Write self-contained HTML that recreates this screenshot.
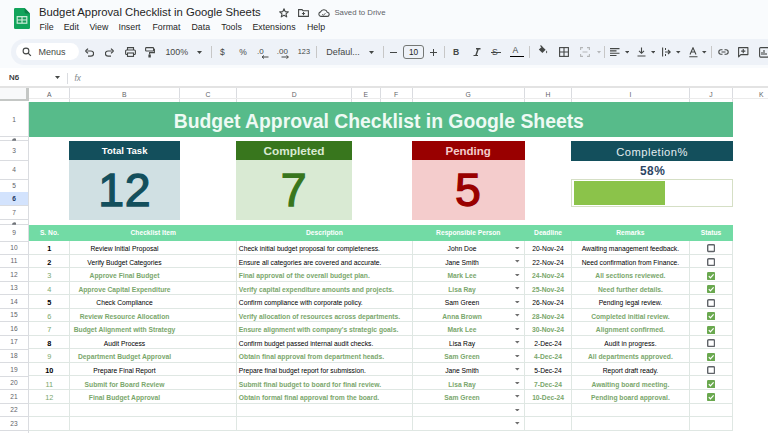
<!DOCTYPE html>
<html><head><meta charset="utf-8"><style>
html,body{margin:0;padding:0;width:768px;height:433px;overflow:hidden;background:#fff;font-family:"Liberation Sans", sans-serif;}
</style></head><body>
<div style="position:absolute;left:0.00px;top:0.00px;width:768.00px;height:68.00px;background:#f9fbfd"></div><svg style="position:absolute;left:13.50px;top:8.00px;" width="16" height="21" viewBox="0 0 16 21"><path d="M1.3 0 H10.6 L16 5.4 V19.7 A1.3 1.3 0 0 1 14.7 21 H1.3 A1.3 1.3 0 0 1 0 19.7 V1.3 A1.3 1.3 0 0 1 1.3 0Z" fill="#12a45b"/><path d="M10.6 0 L16 5.4 H12 A1.4 1.4 0 0 1 10.6 4Z" fill="#0c7f46"/><rect x="2.6" y="8" width="10.8" height="7.8" fill="#c8ecd6"/><rect x="3.8" y="9.3" width="3.6" height="2.1" fill="#1a9a5a"/><rect x="8.6" y="9.3" width="3.6" height="2.1" fill="#1a9a5a"/><rect x="3.8" y="12.5" width="3.6" height="2.1" fill="#1a9a5a"/><rect x="8.6" y="12.5" width="3.6" height="2.1" fill="#1a9a5a"/></svg><div style="position:absolute;left:39.00px;top:5.77px;font-size:11.3px;line-height:12.98px;color:#1f1f1f;font-weight:normal;white-space:nowrap;">Budget Approval Checklist in Google Sheets</div><svg style="position:absolute;left:278.50px;top:8.00px;" width="10" height="9.5" viewBox="0 0 10 9.5"><path d="M5 0.8 L6.2 3.6 L9.3 3.9 L7 5.9 L7.7 8.9 L5 7.3 L2.3 8.9 L3 5.9 L0.7 3.9 L3.8 3.6Z" fill="none" stroke="#444746" stroke-width="1.1" stroke-linejoin="round"/></svg><svg style="position:absolute;left:298.00px;top:8.50px;" width="11" height="8" viewBox="0 0 11 8"><path d="M0.6 0.6 H4 L5 1.7 H10.4 V7.4 H0.6Z" fill="none" stroke="#444746" stroke-width="1.1"/><path d="M5.5 3 V6.2 M3.9 4.6 H7.1" stroke="#444746" stroke-width="1"/></svg><svg style="position:absolute;left:318.00px;top:8.50px;" width="11.5" height="8" viewBox="0 0 11.5 8"><path d="M2.8 7.4 H9 A2.1 2.1 0 0 0 9.2 3.2 A3.5 3.5 0 0 0 2.6 2.9 A2.3 2.3 0 0 0 2.8 7.4Z" fill="none" stroke="#444746" stroke-width="1.1"/><path d="M4.2 5.3 L5.4 6.3 L7.4 4.2" fill="none" stroke="#444746" stroke-width="0.9"/></svg><div style="position:absolute;left:334.40px;top:8.74px;font-size:7.8px;line-height:8.96px;color:#5f6368;font-weight:normal;white-space:nowrap;">Saved to Drive</div><div style="position:absolute;left:39.40px;top:21.64px;font-size:8.8px;line-height:10.11px;color:#1f1f1f;font-weight:normal;white-space:nowrap;">File</div><div style="position:absolute;left:63.75px;top:21.64px;font-size:8.8px;line-height:10.11px;color:#1f1f1f;font-weight:normal;white-space:nowrap;">Edit</div><div style="position:absolute;left:89.40px;top:21.64px;font-size:8.8px;line-height:10.11px;color:#1f1f1f;font-weight:normal;white-space:nowrap;">View</div><div style="position:absolute;left:118.50px;top:21.64px;font-size:8.8px;line-height:10.11px;color:#1f1f1f;font-weight:normal;white-space:nowrap;">Insert</div><div style="position:absolute;left:152.50px;top:21.64px;font-size:8.8px;line-height:10.11px;color:#1f1f1f;font-weight:normal;white-space:nowrap;">Format</div><div style="position:absolute;left:191.50px;top:21.64px;font-size:8.8px;line-height:10.11px;color:#1f1f1f;font-weight:normal;white-space:nowrap;">Data</div><div style="position:absolute;left:221.25px;top:21.64px;font-size:8.8px;line-height:10.11px;color:#1f1f1f;font-weight:normal;white-space:nowrap;">Tools</div><div style="position:absolute;left:252.50px;top:21.64px;font-size:8.8px;line-height:10.11px;color:#1f1f1f;font-weight:normal;white-space:nowrap;">Extensions</div><div style="position:absolute;left:307.00px;top:21.64px;font-size:8.8px;line-height:10.11px;color:#1f1f1f;font-weight:normal;white-space:nowrap;">Help</div><div style="position:absolute;left:11.00px;top:39.00px;width:777.00px;height:25.50px;background:#eef2f8;border-radius:13px"></div><div style="position:absolute;left:16.00px;top:42.50px;width:62.70px;height:17.70px;background:#fff;border-radius:9px"></div><svg style="position:absolute;left:22.00px;top:46.80px;" width="10" height="10" viewBox="0 0 10 10"><circle cx="4" cy="4" r="2.9" fill="none" stroke="#444746" stroke-width="1.1"/><path d="M6.1 6.1 L8.9 8.9" stroke="#444746" stroke-width="1.2"/></svg><div style="position:absolute;left:38.60px;top:46.75px;font-size:9px;line-height:10.34px;color:#444746;font-weight:normal;white-space:nowrap;">Menus</div><svg style="position:absolute;left:85.00px;top:47.50px;" width="9" height="9" viewBox="0 0 9 9"><path d="M2.2 3 H6 A2.6 2.6 0 0 1 6 8.2 H3" fill="none" stroke="#444746" stroke-width="1.2"/><path d="M0.5 3 L3 0.6 M0.5 3 L3 5.4" stroke="#444746" stroke-width="1.2" fill="none"/></svg><svg style="position:absolute;left:105.00px;top:47.50px;" width="9" height="9" viewBox="0 0 9 9"><path d="M6.8 3 H3 A2.6 2.6 0 0 0 3 8.2 H6" fill="none" stroke="#444746" stroke-width="1.2"/><path d="M8.5 3 L6 0.6 M8.5 3 L6 5.4" stroke="#444746" stroke-width="1.2" fill="none"/></svg><svg style="position:absolute;left:124.50px;top:47.00px;" width="11" height="10" viewBox="0 0 11 10"><path d="M2.5 3 V0.6 H8.5 V3" fill="none" stroke="#444746" stroke-width="1.1"/><rect x="0.6" y="3" width="9.8" height="4.5" rx="1" fill="none" stroke="#444746" stroke-width="1.1"/><rect x="2.5" y="6" width="6" height="3.4" fill="#eef2f8" stroke="#444746" stroke-width="1.1"/></svg><svg style="position:absolute;left:144.50px;top:46.50px;" width="10" height="11" viewBox="0 0 10 11"><rect x="0.6" y="0.6" width="8" height="3.4" rx="0.8" fill="none" stroke="#444746" stroke-width="1.1"/><path d="M8.6 2.3 H9.4 V5.6 H4.6 V7.5" fill="none" stroke="#444746" stroke-width="1.1"/><rect x="3.4" y="7.5" width="2.4" height="3" fill="#444746"/></svg><div style="position:absolute;left:165.40px;top:47.15px;font-size:8.9px;line-height:10.23px;color:#444746;font-weight:normal;white-space:nowrap;">100%</div><svg style="position:absolute;left:196.50px;top:50.50px;" width="5" height="3" viewBox="0 0 5 3"><path d="M0 0 H5 L2.5 3Z" fill="#444746"/></svg><div style="position:absolute;left:210.50px;top:46.00px;width:1.00px;height:12.00px;background:#c7c7c7"></div><div style="position:absolute;left:219.90px;top:47.51px;font-size:8.5px;line-height:9.77px;color:#444746;font-weight:normal;white-space:nowrap;">$</div><div style="position:absolute;left:239.20px;top:47.51px;font-size:8.5px;line-height:9.77px;color:#444746;font-weight:normal;white-space:nowrap;">%</div><div style="position:absolute;left:257.00px;top:46.96px;font-size:8px;line-height:9.19px;color:#444746;font-weight:normal;white-space:nowrap;">.0</div><svg style="position:absolute;left:261.00px;top:54.50px;" width="8" height="4" viewBox="0 0 8 4"><path d="M7.5 2 H1.5 M3 0.5 L1 2 L3 3.5" fill="none" stroke="#444746" stroke-width="1"/></svg><div style="position:absolute;left:276.80px;top:46.96px;font-size:8px;line-height:9.19px;color:#444746;font-weight:normal;white-space:nowrap;">.00</div><svg style="position:absolute;left:281.00px;top:54.50px;" width="9" height="4" viewBox="0 0 9 4"><path d="M0.5 2 H7 M5.5 0.5 L7.5 2 L5.5 3.5" fill="none" stroke="#444746" stroke-width="1"/></svg><div style="position:absolute;left:297.80px;top:48.39px;font-size:7.3px;line-height:8.39px;color:#444746;font-weight:normal;white-space:nowrap;">123</div><div style="position:absolute;left:315.50px;top:46.00px;width:1.00px;height:12.00px;background:#c7c7c7"></div><div style="position:absolute;left:326.30px;top:47.06px;font-size:9px;line-height:10.34px;color:#444746;font-weight:normal;white-space:nowrap;">Defaul...</div><svg style="position:absolute;left:368.50px;top:50.50px;" width="5" height="3" viewBox="0 0 5 3"><path d="M0 0 H5 L2.5 3Z" fill="#444746"/></svg><div style="position:absolute;left:383.00px;top:46.00px;width:1.00px;height:12.00px;background:#c7c7c7"></div><div style="position:absolute;left:390.40px;top:51.50px;width:6.60px;height:1.10px;background:#444746"></div><div style="position:absolute;left:403.40px;top:44.50px;width:20.35px;height:14.90px;border:1px solid #747775;border-radius:3px;box-sizing:border-box"></div><div style="position:absolute;left:403.50px;top:48.09px;width:20.00px;text-align:center;font-size:8.3px;line-height:9.54px;color:#1f1f1f;font-weight:normal;white-space:nowrap;">10</div><div style="position:absolute;left:430.00px;top:51.50px;width:6.80px;height:1.10px;background:#444746"></div><div style="position:absolute;left:433.00px;top:48.50px;width:1.00px;height:7.10px;background:#444746"></div><div style="position:absolute;left:443.50px;top:46.00px;width:1.00px;height:12.00px;background:#c7c7c7"></div><div style="position:absolute;left:453.00px;top:47.72px;font-size:8.6px;line-height:9.88px;color:#444746;font-weight:bold;white-space:nowrap;">B</div><svg style="position:absolute;left:472.50px;top:47.50px;" width="8" height="8.5" viewBox="0 0 8 8.5"><path d="M3 0.7 H7.5 M0.5 7.8 H5 M5.2 0.7 L2.8 7.8" fill="none" stroke="#444746" stroke-width="1.4"/></svg><div style="position:absolute;left:492.00px;top:47.72px;font-size:8.6px;line-height:9.88px;color:#444746;font-weight:normal;white-space:nowrap;">S</div><div style="position:absolute;left:490.70px;top:51.60px;width:10.30px;height:0.90px;background:#444746"></div><div style="position:absolute;left:512.50px;top:46.22px;font-size:8.6px;line-height:9.88px;color:#444746;font-weight:normal;white-space:nowrap;">A</div><div style="position:absolute;left:509.70px;top:55.60px;width:14.00px;height:1.40px;background:#000"></div><div style="position:absolute;left:529.20px;top:46.00px;width:1.00px;height:12.00px;background:#c7c7c7"></div><svg style="position:absolute;left:537.50px;top:44.50px;" width="10" height="9.5" viewBox="0 0 10 9.5"><path d="M2.5 0.5 L4 2" stroke="#444746" stroke-width="1.1"/><path d="M0.8 4.6 L4.2 1.4 L7.6 4.8 L4.4 8 Z" fill="#444746"/><path d="M8.6 5.6 Q9.9 7.3 8.6 8.4 Q7.3 7.3 8.6 5.6Z" fill="#444746"/></svg><svg style="position:absolute;left:558.50px;top:47.00px;" width="10" height="10" viewBox="0 0 10 10"><rect x="0.6" y="0.6" width="8.8" height="8.8" fill="none" stroke="#444746" stroke-width="1.1"/><path d="M5 0.6 V9.4 M0.6 5 H9.4" stroke="#444746" stroke-width="1.1"/></svg><svg style="position:absolute;left:580.30px;top:47.00px;" width="10" height="10" viewBox="0 0 10 10"><path d="M0.6 3 V0.6 H3 M7 0.6 H9.4 V3 M9.4 7 V9.4 H7 M3 9.4 H0.6 V7 M2.5 5 H7.5" fill="none" stroke="#b4b6b8" stroke-width="1.1"/></svg><svg style="position:absolute;left:596.50px;top:51.00px;" width="4" height="2.5" viewBox="0 0 4 2.5"><path d="M0 0 H4 L2 2.5Z" fill="#b4b6b8"/></svg><div style="position:absolute;left:603.50px;top:46.00px;width:1.00px;height:12.00px;background:#c7c7c7"></div><svg style="position:absolute;left:610.00px;top:47.50px;" width="10" height="9" viewBox="0 0 10 9"><path d="M0 0.6 H9.5 M0 2.9 H6.5 M0 5.2 H9.5 M0 7.5 H6.5" stroke="#444746" stroke-width="1.1"/></svg><svg style="position:absolute;left:624.50px;top:51.00px;" width="4.5" height="2.5" viewBox="0 0 4.5 2.5"><path d="M0 0 H4.5 L2.25 2.5Z" fill="#444746"/></svg><svg style="position:absolute;left:637.00px;top:46.50px;" width="9" height="10" viewBox="0 0 9 10"><path d="M4.5 0.5 V6 M2 3.8 L4.5 6.3 L7 3.8 M0.5 9 H8.5" fill="none" stroke="#444746" stroke-width="1.1"/></svg><svg style="position:absolute;left:650.50px;top:51.00px;" width="4.5" height="2.5" viewBox="0 0 4.5 2.5"><path d="M0 0 H4.5 L2.25 2.5Z" fill="#444746"/></svg><svg style="position:absolute;left:662.40px;top:47.00px;" width="9" height="10" viewBox="0 0 9 10"><path d="M0.6 0.5 V9.5 M3 5 H8 M6 3 L8.2 5 L6 7" fill="none" stroke="#444746" stroke-width="1.1"/><path d="M3.5 1 V3 M3.5 7 V9" stroke="#444746" stroke-width="1"/></svg><svg style="position:absolute;left:676.00px;top:51.00px;" width="4.5" height="2.5" viewBox="0 0 4.5 2.5"><path d="M0 0 H4.5 L2.25 2.5Z" fill="#444746"/></svg><svg style="position:absolute;left:688.50px;top:46.50px;" width="9" height="11" viewBox="0 0 9 11"><path d="M1 7.5 L4 0.8 L7 7.5 M2.2 5 H5.8 M0.3 9.8 H8.5" fill="none" stroke="#444746" stroke-width="1.1"/></svg><svg style="position:absolute;left:702.00px;top:51.00px;" width="4.5" height="2.5" viewBox="0 0 4.5 2.5"><path d="M0 0 H4.5 L2.25 2.5Z" fill="#444746"/></svg><div style="position:absolute;left:711.20px;top:46.00px;width:1.00px;height:12.00px;background:#c7c7c7"></div><svg style="position:absolute;left:718.40px;top:48.50px;" width="11" height="6" viewBox="0 0 11 6"><path d="M4.5 0.8 H3 A2.2 2.2 0 0 0 3 5.2 H4.5 M6.5 0.8 H8 A2.2 2.2 0 0 1 8 5.2 H6.5 M3.5 3 H7.5" fill="none" stroke="#444746" stroke-width="1.1"/></svg><svg style="position:absolute;left:738.20px;top:46.50px;" width="10.5" height="11" viewBox="0 0 10.5 11"><path d="M0.6 0.6 H9.9 V7.6 H2.8 L0.6 9.8Z" fill="none" stroke="#444746" stroke-width="1.1" stroke-linejoin="round"/><path d="M5.25 2 V6.2 M3.15 4.1 H7.35" stroke="#444746" stroke-width="1.1"/></svg><svg style="position:absolute;left:759.00px;top:46.50px;" width="10" height="11" viewBox="0 0 10 11"><rect x="0.6" y="0.6" width="9" height="9.5" rx="1" fill="none" stroke="#444746" stroke-width="1.1"/><path d="M3 8 V5 M5 8 V3 M7 8 V6" stroke="#444746" stroke-width="1.1"/></svg><div style="position:absolute;left:0.00px;top:68.00px;width:768.00px;height:18.50px;background:#fff"></div><div style="position:absolute;left:0.00px;top:86.30px;width:768.00px;height:1.60px;background:#e3e3e3"></div><div style="position:absolute;left:9.00px;top:73.94px;font-size:7.8px;line-height:8.96px;color:#1f1f1f;font-weight:normal;white-space:nowrap;-webkit-text-stroke:0.2px #1f1f1f">N6</div><svg style="position:absolute;left:54.70px;top:76.00px;" width="5" height="3" viewBox="0 0 5 3"><path d="M0 0 H5 L2.5 3Z" fill="#444746"/></svg><div style="position:absolute;left:67.20px;top:72.50px;width:0.80px;height:11.00px;background:#dadce0"></div><div style="position:absolute;left:74.50px;top:74.38px;font-size:8.2px;line-height:9.42px;color:#80868b;font-weight:normal;white-space:nowrap;font-style:italic;font-family:"Liberation Serif"">fx</div><div style="position:absolute;left:0.00px;top:87.90px;width:768.00px;height:345.10px;background:#fff"></div><div style="position:absolute;left:29.35px;top:90.75px;width:40.00px;text-align:center;font-size:6.8px;line-height:7.81px;color:#5f6368;font-weight:normal;white-space:nowrap;">A</div><div style="position:absolute;left:69.20px;top:87.90px;width:0.80px;height:14.60px;background:#dadce0"></div><div style="position:absolute;left:104.35px;top:90.75px;width:40.00px;text-align:center;font-size:6.8px;line-height:7.81px;color:#5f6368;font-weight:normal;white-space:nowrap;">B</div><div style="position:absolute;left:178.50px;top:87.90px;width:0.80px;height:14.60px;background:#dadce0"></div><div style="position:absolute;left:187.85px;top:90.75px;width:40.00px;text-align:center;font-size:6.8px;line-height:7.81px;color:#5f6368;font-weight:normal;white-space:nowrap;">C</div><div style="position:absolute;left:236.20px;top:87.90px;width:0.80px;height:14.60px;background:#dadce0"></div><div style="position:absolute;left:274.10px;top:90.75px;width:40.00px;text-align:center;font-size:6.8px;line-height:7.81px;color:#5f6368;font-weight:normal;white-space:nowrap;">D</div><div style="position:absolute;left:351.00px;top:87.90px;width:0.80px;height:14.60px;background:#dadce0"></div><div style="position:absolute;left:345.75px;top:90.75px;width:40.00px;text-align:center;font-size:6.8px;line-height:7.81px;color:#5f6368;font-weight:normal;white-space:nowrap;">E</div><div style="position:absolute;left:379.50px;top:87.90px;width:0.80px;height:14.60px;background:#dadce0"></div><div style="position:absolute;left:376.00px;top:90.75px;width:40.00px;text-align:center;font-size:6.8px;line-height:7.81px;color:#5f6368;font-weight:normal;white-space:nowrap;">F</div><div style="position:absolute;left:411.50px;top:87.90px;width:0.80px;height:14.60px;background:#dadce0"></div><div style="position:absolute;left:448.25px;top:90.75px;width:40.00px;text-align:center;font-size:6.8px;line-height:7.81px;color:#5f6368;font-weight:normal;white-space:nowrap;">G</div><div style="position:absolute;left:524.00px;top:87.90px;width:0.80px;height:14.60px;background:#dadce0"></div><div style="position:absolute;left:528.00px;top:90.75px;width:40.00px;text-align:center;font-size:6.8px;line-height:7.81px;color:#5f6368;font-weight:normal;white-space:nowrap;">H</div><div style="position:absolute;left:571.00px;top:87.90px;width:0.80px;height:14.60px;background:#dadce0"></div><div style="position:absolute;left:610.40px;top:90.75px;width:40.00px;text-align:center;font-size:6.8px;line-height:7.81px;color:#5f6368;font-weight:normal;white-space:nowrap;">I</div><div style="position:absolute;left:688.80px;top:87.90px;width:0.80px;height:14.60px;background:#dadce0"></div><div style="position:absolute;left:691.05px;top:90.75px;width:40.00px;text-align:center;font-size:6.8px;line-height:7.81px;color:#5f6368;font-weight:normal;white-space:nowrap;">J</div><div style="position:absolute;left:732.30px;top:87.90px;width:0.80px;height:14.60px;background:#dadce0"></div><div style="position:absolute;left:741.40px;top:90.75px;width:40.00px;text-align:center;font-size:6.8px;line-height:7.81px;color:#5f6368;font-weight:normal;white-space:nowrap;">K</div><div style="position:absolute;left:789.50px;top:87.90px;width:0.80px;height:14.60px;background:#dadce0"></div><div style="position:absolute;left:29.00px;top:98.00px;width:739.00px;height:0.80px;background:#ebebeb"></div><div style="position:absolute;left:0.00px;top:87.90px;width:26.40px;height:10.80px;background:#f8f9fa"></div><div style="position:absolute;left:26.40px;top:87.90px;width:2.40px;height:13.60px;background:#c4c7c5"></div><div style="position:absolute;left:0.00px;top:98.70px;width:28.80px;height:2.80px;background:#c4c7c5"></div><div style="position:absolute;left:28.00px;top:101.50px;width:0.80px;height:331.50px;background:#dadce0"></div><div style="position:absolute;left:1.00px;top:115.83px;width:26.00px;text-align:center;font-size:6.6px;line-height:7.58px;color:#5f6368;font-weight:normal;white-space:nowrap;">1</div><div style="position:absolute;left:0.00px;top:136.30px;width:28.00px;height:0.80px;background:#dadce0"></div><div style="position:absolute;left:1.00px;top:146.78px;width:26.00px;text-align:center;font-size:6.6px;line-height:7.58px;color:#5f6368;font-weight:normal;white-space:nowrap;">3</div><div style="position:absolute;left:0.00px;top:160.00px;width:28.00px;height:0.80px;background:#dadce0"></div><div style="position:absolute;left:1.00px;top:166.43px;width:26.00px;text-align:center;font-size:6.6px;line-height:7.58px;color:#5f6368;font-weight:normal;white-space:nowrap;">4</div><div style="position:absolute;left:0.00px;top:179.40px;width:28.00px;height:0.80px;background:#dadce0"></div><div style="position:absolute;left:1.00px;top:182.33px;width:26.00px;text-align:center;font-size:6.6px;line-height:7.58px;color:#5f6368;font-weight:normal;white-space:nowrap;">5</div><div style="position:absolute;left:0.00px;top:191.80px;width:28.00px;height:0.80px;background:#dadce0"></div><div style="position:absolute;left:0.00px;top:192.10px;width:28.00px;height:13.50px;background:#d3e3fd"></div><div style="position:absolute;left:1.00px;top:195.28px;width:26.00px;text-align:center;font-size:6.6px;line-height:7.58px;color:#1a3560;font-weight:bold;white-space:nowrap;">6</div><div style="position:absolute;left:0.00px;top:205.30px;width:28.00px;height:0.80px;background:#dadce0"></div><div style="position:absolute;left:1.00px;top:209.08px;width:26.00px;text-align:center;font-size:6.6px;line-height:7.58px;color:#5f6368;font-weight:normal;white-space:nowrap;">7</div><div style="position:absolute;left:0.00px;top:219.40px;width:28.00px;height:0.80px;background:#dadce0"></div><div style="position:absolute;left:1.00px;top:229.33px;width:26.00px;text-align:center;font-size:6.6px;line-height:7.58px;color:#5f6368;font-weight:normal;white-space:nowrap;">9</div><div style="position:absolute;left:0.00px;top:240.90px;width:28.00px;height:0.80px;background:#dadce0"></div><div style="position:absolute;left:1.00px;top:243.76px;width:26.00px;text-align:center;font-size:6.6px;line-height:7.58px;color:#5f6368;font-weight:normal;white-space:nowrap;">10</div><div style="position:absolute;left:0.00px;top:253.80px;width:28.00px;height:0.80px;background:#dadce0"></div><div style="position:absolute;left:1.00px;top:257.29px;width:26.00px;text-align:center;font-size:6.6px;line-height:7.58px;color:#5f6368;font-weight:normal;white-space:nowrap;">11</div><div style="position:absolute;left:0.00px;top:267.33px;width:28.00px;height:0.80px;background:#dadce0"></div><div style="position:absolute;left:1.00px;top:270.82px;width:26.00px;text-align:center;font-size:6.6px;line-height:7.58px;color:#5f6368;font-weight:normal;white-space:nowrap;">12</div><div style="position:absolute;left:0.00px;top:280.86px;width:28.00px;height:0.80px;background:#dadce0"></div><div style="position:absolute;left:1.00px;top:284.35px;width:26.00px;text-align:center;font-size:6.6px;line-height:7.58px;color:#5f6368;font-weight:normal;white-space:nowrap;">13</div><div style="position:absolute;left:0.00px;top:294.39px;width:28.00px;height:0.80px;background:#dadce0"></div><div style="position:absolute;left:1.00px;top:297.88px;width:26.00px;text-align:center;font-size:6.6px;line-height:7.58px;color:#5f6368;font-weight:normal;white-space:nowrap;">14</div><div style="position:absolute;left:0.00px;top:307.92px;width:28.00px;height:0.80px;background:#dadce0"></div><div style="position:absolute;left:1.00px;top:311.41px;width:26.00px;text-align:center;font-size:6.6px;line-height:7.58px;color:#5f6368;font-weight:normal;white-space:nowrap;">15</div><div style="position:absolute;left:0.00px;top:321.45px;width:28.00px;height:0.80px;background:#dadce0"></div><div style="position:absolute;left:1.00px;top:324.94px;width:26.00px;text-align:center;font-size:6.6px;line-height:7.58px;color:#5f6368;font-weight:normal;white-space:nowrap;">16</div><div style="position:absolute;left:0.00px;top:334.98px;width:28.00px;height:0.80px;background:#dadce0"></div><div style="position:absolute;left:1.00px;top:338.47px;width:26.00px;text-align:center;font-size:6.6px;line-height:7.58px;color:#5f6368;font-weight:normal;white-space:nowrap;">17</div><div style="position:absolute;left:0.00px;top:348.51px;width:28.00px;height:0.80px;background:#dadce0"></div><div style="position:absolute;left:1.00px;top:352.00px;width:26.00px;text-align:center;font-size:6.6px;line-height:7.58px;color:#5f6368;font-weight:normal;white-space:nowrap;">18</div><div style="position:absolute;left:0.00px;top:362.04px;width:28.00px;height:0.80px;background:#dadce0"></div><div style="position:absolute;left:1.00px;top:365.53px;width:26.00px;text-align:center;font-size:6.6px;line-height:7.58px;color:#5f6368;font-weight:normal;white-space:nowrap;">19</div><div style="position:absolute;left:0.00px;top:375.57px;width:28.00px;height:0.80px;background:#dadce0"></div><div style="position:absolute;left:1.00px;top:379.06px;width:26.00px;text-align:center;font-size:6.6px;line-height:7.58px;color:#5f6368;font-weight:normal;white-space:nowrap;">20</div><div style="position:absolute;left:0.00px;top:389.10px;width:28.00px;height:0.80px;background:#dadce0"></div><div style="position:absolute;left:1.00px;top:392.59px;width:26.00px;text-align:center;font-size:6.6px;line-height:7.58px;color:#5f6368;font-weight:normal;white-space:nowrap;">21</div><div style="position:absolute;left:0.00px;top:402.63px;width:28.00px;height:0.80px;background:#dadce0"></div><div style="position:absolute;left:1.00px;top:406.12px;width:26.00px;text-align:center;font-size:6.6px;line-height:7.58px;color:#5f6368;font-weight:normal;white-space:nowrap;">22</div><div style="position:absolute;left:0.00px;top:416.16px;width:28.00px;height:0.80px;background:#dadce0"></div><div style="position:absolute;left:1.00px;top:419.65px;width:26.00px;text-align:center;font-size:6.6px;line-height:7.58px;color:#5f6368;font-weight:normal;white-space:nowrap;">23</div><div style="position:absolute;left:0.00px;top:429.69px;width:28.00px;height:0.80px;background:#dadce0"></div><div style="position:absolute;left:0.00px;top:136.30px;width:28.00px;height:0.80px;background:#dadce0"></div><div style="position:absolute;left:0.00px;top:140.10px;width:28.00px;height:0.80px;background:#dadce0"></div><svg style="position:absolute;left:11.80px;top:138.20px;" width="4.6" height="2.8" viewBox="0 0 4.6 2.8"><path d="M0 2.8 A2.3 2.6 0 0 1 4.6 2.8Z" fill="#6f7378"/></svg><div style="position:absolute;left:0.00px;top:219.40px;width:28.00px;height:0.80px;background:#dadce0"></div><div style="position:absolute;left:0.00px;top:224.00px;width:28.00px;height:0.80px;background:#dadce0"></div><svg style="position:absolute;left:11.80px;top:222.10px;" width="4.6" height="2.8" viewBox="0 0 4.6 2.8"><path d="M0 2.8 A2.3 2.6 0 0 1 4.6 2.8Z" fill="#6f7378"/></svg><div style="position:absolute;left:29.00px;top:102.20px;width:703.80px;height:34.50px;background:#57bb8a"></div><div style="position:absolute;left:78.80px;top:110.47px;width:600.00px;text-align:center;font-size:19.37px;line-height:22.26px;color:#eefaf4;font-weight:bold;white-space:nowrap;">Budget Approval Checklist in Google Sheets</div><div style="position:absolute;left:69.30px;top:140.80px;width:110.70px;height:19.50px;background:#134f5c"></div><div style="position:absolute;left:24.65px;top:146.10px;width:200.00px;text-align:center;font-size:9.5px;line-height:10.92px;color:#ffffff;font-weight:bold;white-space:nowrap;">Total Task</div><div style="position:absolute;left:69.30px;top:160.30px;width:110.70px;height:59.40px;background:#d0e0e3"></div><div style="position:absolute;left:24.65px;top:164.12px;width:200.00px;text-align:center;font-size:46.5px;line-height:53.43px;color:#134f5c;font-weight:normal;white-space:nowrap;-webkit-text-stroke:1.3px #134f5c;letter-spacing:0.5px">12</div><div style="position:absolute;left:236.40px;top:140.80px;width:115.30px;height:19.50px;background:#38761d"></div><div style="position:absolute;left:194.05px;top:145.02px;width:200.00px;text-align:center;font-size:11.8px;line-height:13.56px;color:#d9ead3;font-weight:bold;white-space:nowrap;">Completed</div><div style="position:absolute;left:236.40px;top:160.30px;width:115.30px;height:59.40px;background:#d9ead3"></div><div style="position:absolute;left:194.05px;top:164.12px;width:200.00px;text-align:center;font-size:46.5px;line-height:53.43px;color:#38761d;font-weight:normal;white-space:nowrap;-webkit-text-stroke:1.3px #38761d;letter-spacing:0.5px">7</div><div style="position:absolute;left:411.80px;top:140.80px;width:112.80px;height:19.50px;background:#990000"></div><div style="position:absolute;left:368.20px;top:145.29px;width:200.00px;text-align:center;font-size:11.5px;line-height:13.21px;color:#f4cccc;font-weight:bold;white-space:nowrap;">Pending</div><div style="position:absolute;left:411.80px;top:160.30px;width:112.80px;height:59.40px;background:#f4cccc"></div><div style="position:absolute;left:368.20px;top:164.12px;width:200.00px;text-align:center;font-size:46.5px;line-height:53.43px;color:#990000;font-weight:normal;white-space:nowrap;-webkit-text-stroke:1.3px #990000;letter-spacing:0.5px">5</div><div style="position:absolute;left:571.30px;top:140.80px;width:161.70px;height:20.00px;background:#134f5c"></div><div style="position:absolute;left:552.10px;top:145.96px;width:200.00px;text-align:center;font-size:11.2px;line-height:12.87px;color:#e3edf0;font-weight:normal;white-space:nowrap;letter-spacing:0.45px">Completion%</div><div style="position:absolute;left:602.60px;top:164.53px;width:100.00px;text-align:center;font-size:11.9px;line-height:13.67px;color:#2e4663;font-weight:bold;white-space:nowrap;letter-spacing:0.5px">58%</div><div style="position:absolute;left:571.30px;top:178.70px;width:161.70px;height:28.50px;border:1px solid #d5dfc5;box-sizing:border-box;background:#fff"></div><div style="position:absolute;left:573.60px;top:180.70px;width:91.40px;height:23.90px;background:#8bc34a"></div><div style="position:absolute;left:29.00px;top:224.60px;width:703.80px;height:16.60px;background:#72dba5"></div><div style="position:absolute;left:-50.65px;top:229.24px;width:200.00px;text-align:center;font-size:6.7px;line-height:7.70px;color:#ffffff;font-weight:bold;white-space:nowrap;">S. No.</div><div style="position:absolute;left:53.20px;top:229.24px;width:200.00px;text-align:center;font-size:6.7px;line-height:7.70px;color:#ffffff;font-weight:bold;white-space:nowrap;">Checklist Item</div><div style="position:absolute;left:224.35px;top:229.24px;width:200.00px;text-align:center;font-size:6.7px;line-height:7.70px;color:#ffffff;font-weight:bold;white-space:nowrap;">Description</div><div style="position:absolute;left:368.25px;top:229.24px;width:200.00px;text-align:center;font-size:6.7px;line-height:7.70px;color:#ffffff;font-weight:bold;white-space:nowrap;">Responsible Person</div><div style="position:absolute;left:448.00px;top:229.24px;width:200.00px;text-align:center;font-size:6.7px;line-height:7.70px;color:#ffffff;font-weight:bold;white-space:nowrap;">Deadline</div><div style="position:absolute;left:530.40px;top:229.24px;width:200.00px;text-align:center;font-size:6.7px;line-height:7.70px;color:#ffffff;font-weight:bold;white-space:nowrap;">Remarks</div><div style="position:absolute;left:611.05px;top:229.24px;width:200.00px;text-align:center;font-size:6.7px;line-height:7.70px;color:#ffffff;font-weight:bold;white-space:nowrap;">Status</div><div style="position:absolute;left:29.00px;top:253.70px;width:703.80px;height:0.90px;background:#dfe7e3"></div><div style="position:absolute;left:29.35px;top:245.23px;width:40.00px;text-align:center;font-size:7.3px;line-height:8.39px;color:#000000;font-weight:bold;white-space:nowrap;">1</div><div style="position:absolute;left:39.50px;top:245.24px;width:170.00px;text-align:center;font-size:6.73px;line-height:7.73px;color:#000000;font-weight:normal;white-space:nowrap;">Review Initial Proposal</div><div style="position:absolute;left:238.80px;top:245.24px;font-size:6.73px;line-height:7.73px;color:#000000;font-weight:normal;white-space:nowrap;">Check initial budget proposal for completeness.</div><div style="position:absolute;left:412.00px;top:245.24px;width:100.00px;text-align:center;font-size:6.73px;line-height:7.73px;color:#000000;font-weight:normal;white-space:nowrap;">John Doe</div><div style="position:absolute;left:518.00px;top:245.24px;width:60.00px;text-align:center;font-size:6.73px;line-height:7.73px;color:#000000;font-weight:normal;white-space:nowrap;">20-Nov-24</div><div style="position:absolute;left:571.40px;top:245.24px;width:118.00px;text-align:center;font-size:6.73px;line-height:7.73px;color:#000000;font-weight:normal;white-space:nowrap;">Awaiting management feedback.</div><svg style="position:absolute;left:707.20px;top:244.43px;" width="8.2" height="8.2" viewBox="0 0 8.2 8.2"><rect x="0.7" y="0.7" width="6.8" height="6.8" rx="1" fill="none" stroke="#5f6368" stroke-width="1.4"/></svg><svg style="position:absolute;left:515.30px;top:246.53px;" width="4.6" height="2.6" viewBox="0 0 4.6 2.6"><path d="M0 0 H4.6 L2.3 2.6Z" fill="#6f6f6f"/></svg><div style="position:absolute;left:29.00px;top:267.23px;width:703.80px;height:0.90px;background:#dfe7e3"></div><div style="position:absolute;left:29.35px;top:258.76px;width:40.00px;text-align:center;font-size:7.3px;line-height:8.39px;color:#000000;font-weight:bold;white-space:nowrap;">2</div><div style="position:absolute;left:39.50px;top:258.77px;width:170.00px;text-align:center;font-size:6.73px;line-height:7.73px;color:#000000;font-weight:normal;white-space:nowrap;">Verify Budget Categories</div><div style="position:absolute;left:238.80px;top:258.77px;font-size:6.73px;line-height:7.73px;color:#000000;font-weight:normal;white-space:nowrap;">Ensure all categories are covered and accurate.</div><div style="position:absolute;left:412.00px;top:258.77px;width:100.00px;text-align:center;font-size:6.73px;line-height:7.73px;color:#000000;font-weight:normal;white-space:nowrap;">Jane Smith</div><div style="position:absolute;left:518.00px;top:258.77px;width:60.00px;text-align:center;font-size:6.73px;line-height:7.73px;color:#000000;font-weight:normal;white-space:nowrap;">22-Nov-24</div><div style="position:absolute;left:571.40px;top:258.77px;width:118.00px;text-align:center;font-size:6.73px;line-height:7.73px;color:#000000;font-weight:normal;white-space:nowrap;">Need confirmation from Finance.</div><svg style="position:absolute;left:707.20px;top:257.97px;" width="8.2" height="8.2" viewBox="0 0 8.2 8.2"><rect x="0.7" y="0.7" width="6.8" height="6.8" rx="1" fill="none" stroke="#5f6368" stroke-width="1.4"/></svg><svg style="position:absolute;left:515.30px;top:260.06px;" width="4.6" height="2.6" viewBox="0 0 4.6 2.6"><path d="M0 0 H4.6 L2.3 2.6Z" fill="#6f6f6f"/></svg><div style="position:absolute;left:29.00px;top:280.76px;width:703.80px;height:0.90px;background:#dfe7e3"></div><div style="position:absolute;left:29.35px;top:272.29px;width:40.00px;text-align:center;font-size:7.3px;line-height:8.39px;color:#7aa76c;font-weight:normal;white-space:nowrap;">3</div><div style="position:absolute;left:39.50px;top:272.30px;width:170.00px;text-align:center;font-size:6.73px;line-height:7.73px;color:#7aa76c;font-weight:bold;white-space:nowrap;">Approve Final Budget</div><div style="position:absolute;left:238.80px;top:272.30px;font-size:6.73px;line-height:7.73px;color:#7aa76c;font-weight:bold;white-space:nowrap;">Final approval of the overall budget plan.</div><div style="position:absolute;left:412.00px;top:272.30px;width:100.00px;text-align:center;font-size:6.73px;line-height:7.73px;color:#7aa76c;font-weight:bold;white-space:nowrap;">Mark Lee</div><div style="position:absolute;left:518.00px;top:272.30px;width:60.00px;text-align:center;font-size:6.73px;line-height:7.73px;color:#7aa76c;font-weight:bold;white-space:nowrap;">24-Nov-24</div><div style="position:absolute;left:571.40px;top:272.30px;width:118.00px;text-align:center;font-size:6.73px;line-height:7.73px;color:#7aa76c;font-weight:bold;white-space:nowrap;">All sections reviewed.</div><svg style="position:absolute;left:707.20px;top:271.50px;" width="8.2" height="8.2" viewBox="0 0 8.2 8.2"><rect x="0" y="0" width="8.2" height="8.2" rx="1.2" fill="#6aa84f"/><path d="M1.8 4.2 L3.4 5.8 L6.6 2.4" fill="none" stroke="#fff" stroke-width="1.2"/></svg><svg style="position:absolute;left:515.30px;top:273.59px;" width="4.6" height="2.6" viewBox="0 0 4.6 2.6"><path d="M0 0 H4.6 L2.3 2.6Z" fill="#6f6f6f"/></svg><div style="position:absolute;left:29.00px;top:294.29px;width:703.80px;height:0.90px;background:#dfe7e3"></div><div style="position:absolute;left:29.35px;top:285.82px;width:40.00px;text-align:center;font-size:7.3px;line-height:8.39px;color:#7aa76c;font-weight:normal;white-space:nowrap;">4</div><div style="position:absolute;left:39.50px;top:285.83px;width:170.00px;text-align:center;font-size:6.73px;line-height:7.73px;color:#7aa76c;font-weight:bold;white-space:nowrap;">Approve Capital Expenditure</div><div style="position:absolute;left:238.80px;top:285.83px;font-size:6.73px;line-height:7.73px;color:#7aa76c;font-weight:bold;white-space:nowrap;">Verify capital expenditure amounts and projects.</div><div style="position:absolute;left:412.00px;top:285.83px;width:100.00px;text-align:center;font-size:6.73px;line-height:7.73px;color:#7aa76c;font-weight:bold;white-space:nowrap;">Lisa Ray</div><div style="position:absolute;left:518.00px;top:285.83px;width:60.00px;text-align:center;font-size:6.73px;line-height:7.73px;color:#7aa76c;font-weight:bold;white-space:nowrap;">25-Nov-24</div><div style="position:absolute;left:571.40px;top:285.83px;width:118.00px;text-align:center;font-size:6.73px;line-height:7.73px;color:#7aa76c;font-weight:bold;white-space:nowrap;">Need further details.</div><svg style="position:absolute;left:707.20px;top:285.02px;" width="8.2" height="8.2" viewBox="0 0 8.2 8.2"><rect x="0" y="0" width="8.2" height="8.2" rx="1.2" fill="#6aa84f"/><path d="M1.8 4.2 L3.4 5.8 L6.6 2.4" fill="none" stroke="#fff" stroke-width="1.2"/></svg><svg style="position:absolute;left:515.30px;top:287.12px;" width="4.6" height="2.6" viewBox="0 0 4.6 2.6"><path d="M0 0 H4.6 L2.3 2.6Z" fill="#6f6f6f"/></svg><div style="position:absolute;left:29.00px;top:307.82px;width:703.80px;height:0.90px;background:#dfe7e3"></div><div style="position:absolute;left:29.35px;top:299.35px;width:40.00px;text-align:center;font-size:7.3px;line-height:8.39px;color:#000000;font-weight:bold;white-space:nowrap;">5</div><div style="position:absolute;left:39.50px;top:299.36px;width:170.00px;text-align:center;font-size:6.73px;line-height:7.73px;color:#000000;font-weight:normal;white-space:nowrap;">Check Compliance</div><div style="position:absolute;left:238.80px;top:299.36px;font-size:6.73px;line-height:7.73px;color:#000000;font-weight:normal;white-space:nowrap;">Confirm compliance with corporate policy.</div><div style="position:absolute;left:412.00px;top:299.36px;width:100.00px;text-align:center;font-size:6.73px;line-height:7.73px;color:#000000;font-weight:normal;white-space:nowrap;">Sam Green</div><div style="position:absolute;left:518.00px;top:299.36px;width:60.00px;text-align:center;font-size:6.73px;line-height:7.73px;color:#000000;font-weight:normal;white-space:nowrap;">26-Nov-24</div><div style="position:absolute;left:571.40px;top:299.36px;width:118.00px;text-align:center;font-size:6.73px;line-height:7.73px;color:#000000;font-weight:normal;white-space:nowrap;">Pending legal review.</div><svg style="position:absolute;left:707.20px;top:298.56px;" width="8.2" height="8.2" viewBox="0 0 8.2 8.2"><rect x="0.7" y="0.7" width="6.8" height="6.8" rx="1" fill="none" stroke="#5f6368" stroke-width="1.4"/></svg><svg style="position:absolute;left:515.30px;top:300.65px;" width="4.6" height="2.6" viewBox="0 0 4.6 2.6"><path d="M0 0 H4.6 L2.3 2.6Z" fill="#6f6f6f"/></svg><div style="position:absolute;left:29.00px;top:321.35px;width:703.80px;height:0.90px;background:#dfe7e3"></div><div style="position:absolute;left:29.35px;top:312.88px;width:40.00px;text-align:center;font-size:7.3px;line-height:8.39px;color:#7aa76c;font-weight:normal;white-space:nowrap;">6</div><div style="position:absolute;left:39.50px;top:312.89px;width:170.00px;text-align:center;font-size:6.73px;line-height:7.73px;color:#7aa76c;font-weight:bold;white-space:nowrap;">Review Resource Allocation</div><div style="position:absolute;left:238.80px;top:312.89px;font-size:6.73px;line-height:7.73px;color:#7aa76c;font-weight:bold;white-space:nowrap;">Verify allocation of resources across departments.</div><div style="position:absolute;left:412.00px;top:312.89px;width:100.00px;text-align:center;font-size:6.73px;line-height:7.73px;color:#7aa76c;font-weight:bold;white-space:nowrap;">Anna Brown</div><div style="position:absolute;left:518.00px;top:312.89px;width:60.00px;text-align:center;font-size:6.73px;line-height:7.73px;color:#7aa76c;font-weight:bold;white-space:nowrap;">28-Nov-24</div><div style="position:absolute;left:571.40px;top:312.89px;width:118.00px;text-align:center;font-size:6.73px;line-height:7.73px;color:#7aa76c;font-weight:bold;white-space:nowrap;">Completed initial review.</div><svg style="position:absolute;left:707.20px;top:312.08px;" width="8.2" height="8.2" viewBox="0 0 8.2 8.2"><rect x="0" y="0" width="8.2" height="8.2" rx="1.2" fill="#6aa84f"/><path d="M1.8 4.2 L3.4 5.8 L6.6 2.4" fill="none" stroke="#fff" stroke-width="1.2"/></svg><svg style="position:absolute;left:515.30px;top:314.18px;" width="4.6" height="2.6" viewBox="0 0 4.6 2.6"><path d="M0 0 H4.6 L2.3 2.6Z" fill="#6f6f6f"/></svg><div style="position:absolute;left:29.00px;top:334.88px;width:703.80px;height:0.90px;background:#dfe7e3"></div><div style="position:absolute;left:29.35px;top:326.41px;width:40.00px;text-align:center;font-size:7.3px;line-height:8.39px;color:#7aa76c;font-weight:normal;white-space:nowrap;">7</div><div style="position:absolute;left:39.50px;top:326.42px;width:170.00px;text-align:center;font-size:6.73px;line-height:7.73px;color:#7aa76c;font-weight:bold;white-space:nowrap;">Budget Alignment with Strategy</div><div style="position:absolute;left:238.80px;top:326.42px;font-size:6.73px;line-height:7.73px;color:#7aa76c;font-weight:bold;white-space:nowrap;">Ensure alignment with company's strategic goals.</div><div style="position:absolute;left:412.00px;top:326.42px;width:100.00px;text-align:center;font-size:6.73px;line-height:7.73px;color:#7aa76c;font-weight:bold;white-space:nowrap;">Mark Lee</div><div style="position:absolute;left:518.00px;top:326.42px;width:60.00px;text-align:center;font-size:6.73px;line-height:7.73px;color:#7aa76c;font-weight:bold;white-space:nowrap;">30-Nov-24</div><div style="position:absolute;left:571.40px;top:326.42px;width:118.00px;text-align:center;font-size:6.73px;line-height:7.73px;color:#7aa76c;font-weight:bold;white-space:nowrap;">Alignment confirmed.</div><svg style="position:absolute;left:707.20px;top:325.62px;" width="8.2" height="8.2" viewBox="0 0 8.2 8.2"><rect x="0" y="0" width="8.2" height="8.2" rx="1.2" fill="#6aa84f"/><path d="M1.8 4.2 L3.4 5.8 L6.6 2.4" fill="none" stroke="#fff" stroke-width="1.2"/></svg><svg style="position:absolute;left:515.30px;top:327.71px;" width="4.6" height="2.6" viewBox="0 0 4.6 2.6"><path d="M0 0 H4.6 L2.3 2.6Z" fill="#6f6f6f"/></svg><div style="position:absolute;left:29.00px;top:348.41px;width:703.80px;height:0.90px;background:#dfe7e3"></div><div style="position:absolute;left:29.35px;top:339.94px;width:40.00px;text-align:center;font-size:7.3px;line-height:8.39px;color:#000000;font-weight:bold;white-space:nowrap;">8</div><div style="position:absolute;left:39.50px;top:339.95px;width:170.00px;text-align:center;font-size:6.73px;line-height:7.73px;color:#000000;font-weight:normal;white-space:nowrap;">Audit Process</div><div style="position:absolute;left:238.80px;top:339.95px;font-size:6.73px;line-height:7.73px;color:#000000;font-weight:normal;white-space:nowrap;">Confirm budget passed internal audit checks.</div><div style="position:absolute;left:412.00px;top:339.95px;width:100.00px;text-align:center;font-size:6.73px;line-height:7.73px;color:#000000;font-weight:normal;white-space:nowrap;">Lisa Ray</div><div style="position:absolute;left:518.00px;top:339.95px;width:60.00px;text-align:center;font-size:6.73px;line-height:7.73px;color:#000000;font-weight:normal;white-space:nowrap;">2-Dec-24</div><div style="position:absolute;left:571.40px;top:339.95px;width:118.00px;text-align:center;font-size:6.73px;line-height:7.73px;color:#000000;font-weight:normal;white-space:nowrap;">Audit in progress.</div><svg style="position:absolute;left:707.20px;top:339.14px;" width="8.2" height="8.2" viewBox="0 0 8.2 8.2"><rect x="0.7" y="0.7" width="6.8" height="6.8" rx="1" fill="none" stroke="#5f6368" stroke-width="1.4"/></svg><svg style="position:absolute;left:515.30px;top:341.24px;" width="4.6" height="2.6" viewBox="0 0 4.6 2.6"><path d="M0 0 H4.6 L2.3 2.6Z" fill="#6f6f6f"/></svg><div style="position:absolute;left:29.00px;top:361.94px;width:703.80px;height:0.90px;background:#dfe7e3"></div><div style="position:absolute;left:29.35px;top:353.47px;width:40.00px;text-align:center;font-size:7.3px;line-height:8.39px;color:#7aa76c;font-weight:normal;white-space:nowrap;">9</div><div style="position:absolute;left:39.50px;top:353.48px;width:170.00px;text-align:center;font-size:6.73px;line-height:7.73px;color:#7aa76c;font-weight:bold;white-space:nowrap;">Department Budget Approval</div><div style="position:absolute;left:238.80px;top:353.48px;font-size:6.73px;line-height:7.73px;color:#7aa76c;font-weight:bold;white-space:nowrap;">Obtain final approval from department heads.</div><div style="position:absolute;left:412.00px;top:353.48px;width:100.00px;text-align:center;font-size:6.73px;line-height:7.73px;color:#7aa76c;font-weight:bold;white-space:nowrap;">Sam Green</div><div style="position:absolute;left:518.00px;top:353.48px;width:60.00px;text-align:center;font-size:6.73px;line-height:7.73px;color:#7aa76c;font-weight:bold;white-space:nowrap;">4-Dec-24</div><div style="position:absolute;left:571.40px;top:353.48px;width:118.00px;text-align:center;font-size:6.73px;line-height:7.73px;color:#7aa76c;font-weight:bold;white-space:nowrap;">All departments approved.</div><svg style="position:absolute;left:707.20px;top:352.68px;" width="8.2" height="8.2" viewBox="0 0 8.2 8.2"><rect x="0" y="0" width="8.2" height="8.2" rx="1.2" fill="#6aa84f"/><path d="M1.8 4.2 L3.4 5.8 L6.6 2.4" fill="none" stroke="#fff" stroke-width="1.2"/></svg><svg style="position:absolute;left:515.30px;top:354.77px;" width="4.6" height="2.6" viewBox="0 0 4.6 2.6"><path d="M0 0 H4.6 L2.3 2.6Z" fill="#6f6f6f"/></svg><div style="position:absolute;left:29.00px;top:375.47px;width:703.80px;height:0.90px;background:#dfe7e3"></div><div style="position:absolute;left:29.35px;top:367.00px;width:40.00px;text-align:center;font-size:7.3px;line-height:8.39px;color:#000000;font-weight:bold;white-space:nowrap;">10</div><div style="position:absolute;left:39.50px;top:367.01px;width:170.00px;text-align:center;font-size:6.73px;line-height:7.73px;color:#000000;font-weight:normal;white-space:nowrap;">Prepare Final Report</div><div style="position:absolute;left:238.80px;top:367.01px;font-size:6.73px;line-height:7.73px;color:#000000;font-weight:normal;white-space:nowrap;">Prepare final budget report for submission.</div><div style="position:absolute;left:412.00px;top:367.01px;width:100.00px;text-align:center;font-size:6.73px;line-height:7.73px;color:#000000;font-weight:normal;white-space:nowrap;">Jane Smith</div><div style="position:absolute;left:518.00px;top:367.01px;width:60.00px;text-align:center;font-size:6.73px;line-height:7.73px;color:#000000;font-weight:normal;white-space:nowrap;">5-Dec-24</div><div style="position:absolute;left:571.40px;top:367.01px;width:118.00px;text-align:center;font-size:6.73px;line-height:7.73px;color:#000000;font-weight:normal;white-space:nowrap;">Report draft ready.</div><svg style="position:absolute;left:707.20px;top:366.20px;" width="8.2" height="8.2" viewBox="0 0 8.2 8.2"><rect x="0.7" y="0.7" width="6.8" height="6.8" rx="1" fill="none" stroke="#5f6368" stroke-width="1.4"/></svg><svg style="position:absolute;left:515.30px;top:368.30px;" width="4.6" height="2.6" viewBox="0 0 4.6 2.6"><path d="M0 0 H4.6 L2.3 2.6Z" fill="#6f6f6f"/></svg><div style="position:absolute;left:29.00px;top:389.00px;width:703.80px;height:0.90px;background:#dfe7e3"></div><div style="position:absolute;left:29.35px;top:380.53px;width:40.00px;text-align:center;font-size:7.3px;line-height:8.39px;color:#7aa76c;font-weight:normal;white-space:nowrap;">11</div><div style="position:absolute;left:39.50px;top:380.54px;width:170.00px;text-align:center;font-size:6.73px;line-height:7.73px;color:#7aa76c;font-weight:bold;white-space:nowrap;">Submit for Board Review</div><div style="position:absolute;left:238.80px;top:380.54px;font-size:6.73px;line-height:7.73px;color:#7aa76c;font-weight:bold;white-space:nowrap;">Submit final budget to board for final review.</div><div style="position:absolute;left:412.00px;top:380.54px;width:100.00px;text-align:center;font-size:6.73px;line-height:7.73px;color:#7aa76c;font-weight:bold;white-space:nowrap;">Lisa Ray</div><div style="position:absolute;left:518.00px;top:380.54px;width:60.00px;text-align:center;font-size:6.73px;line-height:7.73px;color:#7aa76c;font-weight:bold;white-space:nowrap;">7-Dec-24</div><div style="position:absolute;left:571.40px;top:380.54px;width:118.00px;text-align:center;font-size:6.73px;line-height:7.73px;color:#7aa76c;font-weight:bold;white-space:nowrap;">Awaiting board meeting.</div><svg style="position:absolute;left:707.20px;top:379.74px;" width="8.2" height="8.2" viewBox="0 0 8.2 8.2"><rect x="0" y="0" width="8.2" height="8.2" rx="1.2" fill="#6aa84f"/><path d="M1.8 4.2 L3.4 5.8 L6.6 2.4" fill="none" stroke="#fff" stroke-width="1.2"/></svg><svg style="position:absolute;left:515.30px;top:381.83px;" width="4.6" height="2.6" viewBox="0 0 4.6 2.6"><path d="M0 0 H4.6 L2.3 2.6Z" fill="#6f6f6f"/></svg><div style="position:absolute;left:29.00px;top:402.53px;width:703.80px;height:0.90px;background:#dfe7e3"></div><div style="position:absolute;left:29.35px;top:394.06px;width:40.00px;text-align:center;font-size:7.3px;line-height:8.39px;color:#7aa76c;font-weight:normal;white-space:nowrap;">12</div><div style="position:absolute;left:39.50px;top:394.07px;width:170.00px;text-align:center;font-size:6.73px;line-height:7.73px;color:#7aa76c;font-weight:bold;white-space:nowrap;">Final Budget Approval</div><div style="position:absolute;left:238.80px;top:394.07px;font-size:6.73px;line-height:7.73px;color:#7aa76c;font-weight:bold;white-space:nowrap;">Obtain formal final approval from the board.</div><div style="position:absolute;left:412.00px;top:394.07px;width:100.00px;text-align:center;font-size:6.73px;line-height:7.73px;color:#7aa76c;font-weight:bold;white-space:nowrap;">Sam Green</div><div style="position:absolute;left:518.00px;top:394.07px;width:60.00px;text-align:center;font-size:6.73px;line-height:7.73px;color:#7aa76c;font-weight:bold;white-space:nowrap;">10-Dec-24</div><div style="position:absolute;left:571.40px;top:394.07px;width:118.00px;text-align:center;font-size:6.73px;line-height:7.73px;color:#7aa76c;font-weight:bold;white-space:nowrap;">Pending board approval.</div><svg style="position:absolute;left:707.20px;top:393.26px;" width="8.2" height="8.2" viewBox="0 0 8.2 8.2"><rect x="0" y="0" width="8.2" height="8.2" rx="1.2" fill="#6aa84f"/><path d="M1.8 4.2 L3.4 5.8 L6.6 2.4" fill="none" stroke="#fff" stroke-width="1.2"/></svg><svg style="position:absolute;left:515.30px;top:395.36px;" width="4.6" height="2.6" viewBox="0 0 4.6 2.6"><path d="M0 0 H4.6 L2.3 2.6Z" fill="#6f6f6f"/></svg><div style="position:absolute;left:29.00px;top:416.06px;width:703.80px;height:0.90px;background:#dfe7e3"></div><svg style="position:absolute;left:515.30px;top:408.89px;" width="4.6" height="2.6" viewBox="0 0 4.6 2.6"><path d="M0 0 H4.6 L2.3 2.6Z" fill="#6f6f6f"/></svg><div style="position:absolute;left:29.00px;top:429.59px;width:703.80px;height:0.90px;background:#dfe7e3"></div><svg style="position:absolute;left:515.30px;top:422.42px;" width="4.6" height="2.6" viewBox="0 0 4.6 2.6"><path d="M0 0 H4.6 L2.3 2.6Z" fill="#6f6f6f"/></svg><div style="position:absolute;left:69.30px;top:241.20px;width:0.90px;height:189.29px;background:#dfe7e3"></div><div style="position:absolute;left:236.30px;top:241.20px;width:0.90px;height:189.29px;background:#dfe7e3"></div><div style="position:absolute;left:411.60px;top:241.20px;width:0.90px;height:189.29px;background:#dfe7e3"></div><div style="position:absolute;left:524.10px;top:241.20px;width:0.90px;height:189.29px;background:#dfe7e3"></div><div style="position:absolute;left:571.10px;top:241.20px;width:0.90px;height:189.29px;background:#dfe7e3"></div><div style="position:absolute;left:688.90px;top:241.20px;width:0.90px;height:189.29px;background:#dfe7e3"></div><div style="position:absolute;left:732.40px;top:241.20px;width:0.90px;height:189.29px;background:#dfe7e3"></div>
</body></html>
